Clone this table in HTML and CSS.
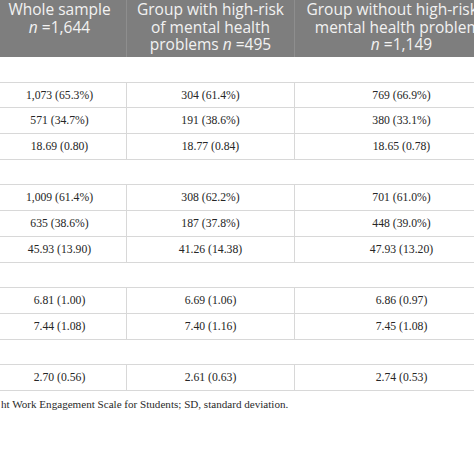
FILE: index.html
```html
<!DOCTYPE html>
<html>
<head>
<meta charset="utf-8">
<link rel="stylesheet" href="styles.css">
</head>
<body>
<div class="page">
  <div class="table">
    <div class="head">
      <div class="hc c1">Whole sample<br><i>n</i> =1,644</div>
      <div class="hc c2">Group with high-risk<br>of mental health<br>problems <i>n</i> =495</div>
      <div class="hc c3">Group without high-risk of<br>mental health problems<br><i>n</i> =1,149</div>
    </div>
    <div class="row section"></div>
    <div class="row"><div class="c c1">1,073 (65.3%)</div><div class="c c2">304 (61.4%)</div><div class="c c3">769 (66.9%)</div></div>
    <div class="row"><div class="c c1">571 (34.7%)</div><div class="c c2">191 (38.6%)</div><div class="c c3">380 (33.1%)</div></div>
    <div class="row"><div class="c c1">18.69 (0.80)</div><div class="c c2">18.77 (0.84)</div><div class="c c3">18.65 (0.78)</div></div>
    <div class="row section"></div>
    <div class="row"><div class="c c1">1,009 (61.4%)</div><div class="c c2">308 (62.2%)</div><div class="c c3">701 (61.0%)</div></div>
    <div class="row"><div class="c c1">635 (38.6%)</div><div class="c c2">187 (37.8%)</div><div class="c c3">448 (39.0%)</div></div>
    <div class="row"><div class="c c1">45.93 (13.90)</div><div class="c c2">41.26 (14.38)</div><div class="c c3">47.93 (13.20)</div></div>
    <div class="row section"></div>
    <div class="row"><div class="c c1">6.81 (1.00)</div><div class="c c2">6.69 (1.06)</div><div class="c c3">6.86 (0.97)</div></div>
    <div class="row"><div class="c c1">7.44 (1.08)</div><div class="c c2">7.40 (1.16)</div><div class="c c3">7.45 (1.08)</div></div>
    <div class="row section"></div>
    <div class="row"><div class="c c1">2.70 (0.56)</div><div class="c c2">2.61 (0.63)</div><div class="c c3">2.74 (0.53)</div></div>
  </div>
  <p class="note">ht Work Engagement Scale for Students; SD, standard deviation.</p>
</div>
</body>
</html>
```
FILE: styles.css
```css
html, body {
  margin: 0;
  padding: 0;
  background: #ffffff;
  overflow: hidden;
}
.page {
  width: 474px;
  height: 474px;
  overflow: hidden;
}
.table {
  width: 515px;
  margin-left: -7px;
}
.head {
  display: flex;
  height: 57px;
  background: #7e7e7e;
  font-family: "Open Sans", sans-serif;
  font-size: 15.5px;
  line-height: 17.5px;
  color: #f2f2f2;
}
.hc {
  box-sizing: border-box;
  text-align: center;
  padding-top: 1px;
}
.hc + .hc {
  border-left: 1px solid #8e8e8e;
}
.c1 { width: 133px; }
.c2 { width: 168px; }
.c3 { width: 214px; }
.row {
  display: flex;
  height: 25.7px;
  box-sizing: border-box;
  border-bottom: 1px solid #d8d8d8;
  font-family: "Liberation Serif", serif;
  font-size: 11.7px;
  color: #262626;
}
.c {
  box-sizing: border-box;
  display: flex;
  align-items: center;
  justify-content: center;
}
.c + .c {
  border-left: 1px solid #d8d8d8;
}
.note {
  margin: 0;
  padding: 6px 0 0 1px;
  font-family: "Liberation Serif", serif;
  font-size: 11.1px;
  line-height: 14px;
  color: #2a2a2a;
  white-space: nowrap;
}
```
